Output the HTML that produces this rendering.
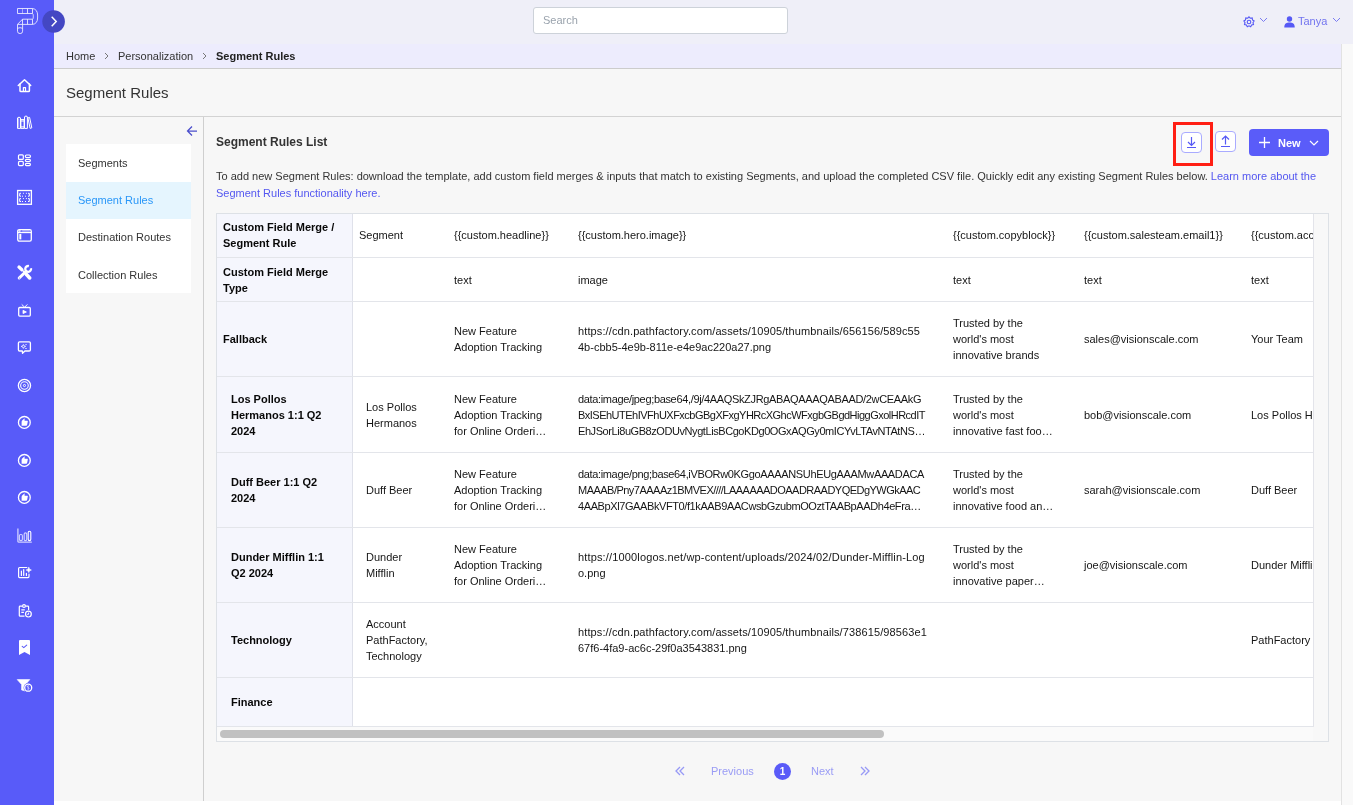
<!DOCTYPE html>
<html><head><meta charset="utf-8">
<style>
*{box-sizing:border-box;margin:0;padding:0}
html{will-change:transform}
html,body{width:1353px;height:805px;overflow:hidden;background:#fff;font-family:"Liberation Sans",sans-serif;font-size:11px;color:#333}
.a{position:absolute}
#side{left:0;top:0;width:54px;height:805px;background:#585bf9}
#hdr{left:54px;top:0;width:1299px;height:44px;background:#efeff8}
#crumb{left:54px;top:44px;width:1287px;height:25px;background:#edecfd;border-bottom:1px solid #cccccc}
#rstrip{left:1341px;top:44px;width:12px;height:761px;background:#f9f9f9;border-left:1px solid #e2e2e2}
#main{left:54px;top:69px;width:1287px;height:732px;background:#f7f7f7}
#titlebar{left:54px;top:69px;width:1287px;height:48px;border-bottom:1px solid #d3d3d3}
#vsep{left:203px;top:117px;width:1px;height:684px;background:#cfcfcf}
.nav{left:66px;width:125px;background:#fff;padding-left:12px;line-height:37px;font-size:11px;color:#333}
.icon{position:absolute}
.hl{left:217px;width:1096px;height:1px;background:#e3e5ea}
.cell{position:absolute;display:flex;align-items:center;line-height:16px;white-space:nowrap;color:#151515;font-size:11px}
.b{font-weight:bold;color:#080808}

</style></head><body>
<div id="side" class="a"></div>
<div id="hdr" class="a"></div>
<div id="crumb" class="a"></div>
<div id="rstrip" class="a"></div>
<div id="main" class="a"></div>
<div id="titlebar" class="a"></div>
<div id="vsep" class="a"></div>

<!-- search -->
<div class="a" style="left:533px;top:7px;width:255px;height:27px;background:#fff;border:1px solid #cdd2d9;border-radius:3px"></div>
<div class="a" style="left:543px;top:14px;font-size:11px;color:#9aa3ad;line-height:13px">Search</div>

<!-- breadcrumb -->
<div class="a" style="left:66px;top:49px;line-height:14px;color:#333">Home</div>
<div class="a" style="left:118px;top:49px;line-height:14px;color:#333">Personalization</div>
<div class="a" style="left:216px;top:49px;line-height:14px;color:#222;font-weight:bold">Segment Rules</div>

<!-- title -->
<div class="a" style="left:66px;top:84px;font-size:15px;line-height:18px;color:#333">Segment Rules</div>

<!-- left nav -->
<div class="a nav" style="top:144px;height:38px;line-height:38px">Segments</div>
<div class="a nav" style="top:182px;height:37px;background:#e5f5fe;color:#2a97f8">Segment Rules</div>
<div class="a nav" style="top:219px;height:37px">Destination Routes</div>
<div class="a nav" style="top:256px;height:37px;line-height:39px">Collection Rules</div>

<!-- table -->
<div class="a" style="left:216px;top:213px;width:1113px;height:529px;border:1px solid #dde1e6;background:#f8f8f8"></div>
<div class="a" style="left:217px;top:214px;width:1097px;height:513px;background:#fff;border-right:1px solid #e3e4ea"></div>
<div class="a" style="left:217px;top:214px;width:136px;height:512px;background:#f5f6fd;border-right:1px solid #dfe1ea"></div>
<div class="a hl" style="top:257px"></div>
<div class="a hl" style="top:301px"></div>
<div class="a hl" style="top:376px"></div>
<div class="a hl" style="top:452px"></div>
<div class="a hl" style="top:527px"></div>
<div class="a hl" style="top:602px"></div>
<div class="a hl" style="top:677px"></div>
<div class="a hl" style="top:726px"></div>
<div id="tclip" class="a" style="left:217px;top:214px;width:1096px;height:512px;overflow:hidden">
<div class="cell b" style="left:6px;top:0px;height:42px"><div>Custom Field Merge /<br>Segment Rule</div></div>
<div class="cell" style="left:142px;top:0px;height:42px"><div>Segment</div></div>
<div class="cell" style="left:237px;top:0px;height:42px"><div>{{custom.headline}}</div></div>
<div class="cell" style="left:361px;top:0px;height:42px"><div>{{custom.hero.image}}</div></div>
<div class="cell" style="left:736px;top:0px;height:42px"><div>{{custom.copyblock}}</div></div>
<div class="cell" style="left:867px;top:0px;height:42px"><div>{{custom.salesteam.email1}}</div></div>
<div class="cell" style="left:1034px;top:0px;height:42px"><div>{{custom.account.name}}</div></div>
<div class="cell b" style="left:6px;top:44px;height:43px"><div>Custom Field Merge<br>Type</div></div>
<div class="cell" style="left:237px;top:44px;height:43px"><div>text</div></div>
<div class="cell" style="left:361px;top:44px;height:43px"><div>image</div></div>
<div class="cell" style="left:736px;top:44px;height:43px"><div>text</div></div>
<div class="cell" style="left:867px;top:44px;height:43px"><div>text</div></div>
<div class="cell" style="left:1034px;top:44px;height:43px"><div>text</div></div>
<div class="cell b" style="left:6px;top:88px;height:74px"><div>Fallback</div></div>
<div class="cell" style="left:237px;top:88px;height:74px"><div>New Feature<br>Adoption Tracking</div></div>
<div class="cell" style="left:361px;top:88px;height:74px"><div><span style="letter-spacing:0.11px">https://cdn.pathfactory.com/assets/10905/thumbnails/656156/589c55</span><br>4b-cbb5-4e9b-811e-e4e9ac220a27.png</div></div>
<div class="cell" style="left:736px;top:88px;height:74px"><div>Trusted by the<br>world's most<br>innovative brands</div></div>
<div class="cell" style="left:867px;top:88px;height:74px"><div>sales@visionscale.com</div></div>
<div class="cell" style="left:1034px;top:88px;height:74px"><div>Your Team</div></div>
<div class="cell b" style="left:14px;top:163px;height:75px"><div>Los Pollos<br>Hermanos 1:1 Q2<br>2024</div></div>
<div class="cell" style="left:149px;top:163px;height:75px"><div>Los Pollos<br>Hermanos</div></div>
<div class="cell" style="left:237px;top:163px;height:75px"><div>New Feature<br>Adoption Tracking<br>for Online Orderi…</div></div>
<div class="cell" style="left:361px;top:163px;height:75px"><div><span style="letter-spacing:-0.34px">data:image/jpeg;base64,/9j/4AAQSkZJRgABAQAAAQABAAD/2wCEAAkG</span><br><span style="letter-spacing:-0.51px">BxISEhUTEhIVFhUXFxcbGBgXFxgYHRcXGhcWFxgbGBgdHiggGxolHRcdIT</span><br><span style="letter-spacing:-0.43px">EhJSorLi8uGB8zODUvNygtLisBCgoKDg0OGxAQGy0mICYvLTAvNTAtNS…</span></div></div>
<div class="cell" style="left:736px;top:163px;height:75px"><div>Trusted by the<br>world's most<br>innovative fast foo…</div></div>
<div class="cell" style="left:867px;top:163px;height:75px"><div>bob@visionscale.com</div></div>
<div class="cell" style="left:1034px;top:163px;height:75px"><div>Los Pollos Hermanos</div></div>
<div class="cell b" style="left:14px;top:239px;height:74px"><div>Duff Beer 1:1 Q2<br>2024</div></div>
<div class="cell" style="left:149px;top:239px;height:74px"><div>Duff Beer</div></div>
<div class="cell" style="left:237px;top:239px;height:74px"><div>New Feature<br>Adoption Tracking<br>for Online Orderi…</div></div>
<div class="cell" style="left:361px;top:239px;height:74px"><div><span style="letter-spacing:-0.35px">data:image/png;base64,iVBORw0KGgoAAAANSUhEUgAAAMwAAADACA</span><br><span style="letter-spacing:-0.52px">MAAAB/Pny7AAAAz1BMVEX////LAAAAAADOAADRAADYQEDgYWGkAAC</span><br><span style="letter-spacing:-0.4px">4AABpXl7GAABkVFT0/f1kAAB9AACwsbGzubmOOztTAABpAADh4eFra…</span></div></div>
<div class="cell" style="left:736px;top:239px;height:74px"><div>Trusted by the<br>world's most<br>innovative food an…</div></div>
<div class="cell" style="left:867px;top:239px;height:74px"><div>sarah@visionscale.com</div></div>
<div class="cell" style="left:1034px;top:239px;height:74px"><div>Duff Beer</div></div>
<div class="cell b" style="left:14px;top:314px;height:74px"><div>Dunder Mifflin 1:1<br>Q2 2024</div></div>
<div class="cell" style="left:149px;top:314px;height:74px"><div>Dunder<br>Mifflin</div></div>
<div class="cell" style="left:237px;top:314px;height:74px"><div>New Feature<br>Adoption Tracking<br>for Online Orderi…</div></div>
<div class="cell" style="left:361px;top:314px;height:74px"><div><span style="letter-spacing:0.15px">https://1000logos.net/wp-content/uploads/2024/02/Dunder-Mifflin-Log</span><br>o.png</div></div>
<div class="cell" style="left:736px;top:314px;height:74px"><div>Trusted by the<br>world's most<br>innovative paper…</div></div>
<div class="cell" style="left:867px;top:314px;height:74px"><div>joe@visionscale.com</div></div>
<div class="cell" style="left:1034px;top:314px;height:74px"><div>Dunder Mifflin</div></div>
<div class="cell b" style="left:14px;top:389px;height:74px"><div>Technology</div></div>
<div class="cell" style="left:149px;top:389px;height:74px"><div>Account<br>PathFactory,<br>Technology</div></div>
<div class="cell" style="left:361px;top:389px;height:74px"><div><span style="letter-spacing:0.11px">https://cdn.pathfactory.com/assets/10905/thumbnails/738615/98563e1</span><br>67f6-4fa9-ac6c-29f0a3543831.png</div></div>
<div class="cell" style="left:1034px;top:389px;height:74px"><div>PathFactory</div></div>
<div class="cell b" style="left:14px;top:464px;height:48px"><div>Finance</div></div>
</div>
<div class="a" style="left:217px;top:727px;width:1096px;height:14px;background:#fafafa"></div>
<div class="a" style="left:220px;top:730px;width:664px;height:8px;background:#c1c1c1;border-radius:4px"></div>
<!-- content header -->
<div class="a" style="left:216px;top:135px;font-size:12px;font-weight:bold;line-height:15px;color:#333">Segment Rules List</div>
<div class="a" style="left:216px;top:168px;width:1110px;line-height:17px;color:#333;white-space:nowrap">To add new Segment Rules: download the template, add custom field merges &amp; inputs that match to existing Segments, and upload the completed CSV file. Quickly edit any existing Segment Rules below. <span style="color:#5457f0">Learn more about the</span><br><span style="color:#5457f0">Segment Rules functionality here.</span></div>

<!-- collapse arrow -->
<svg class="a" style="left:186px;top:125px" width="12" height="12" viewBox="0 0 12 12"><path d="M6 1.5 L1.5 6 L6 10.5 M1.5 6 H11" fill="none" stroke="#4b4fcc" stroke-width="1.25"/></svg>

<!-- buttons -->
<div class="a" style="left:1181px;top:132px;width:21px;height:21px;background:#fff;border:1px solid #a9abff;border-radius:4px"></div>
<svg class="a" style="left:1181px;top:132px" width="21" height="21" viewBox="0 0 21 21"><path d="M10.5 5 V13.5 M7 10 L10.5 13.5 L14 10 M6 15.5 H15" fill="none" stroke="#5659f5" stroke-width="1.2"/></svg>
<div class="a" style="left:1215px;top:131px;width:21px;height:21px;background:#fff;border:1px solid #a9abff;border-radius:4px"></div>
<svg class="a" style="left:1215px;top:131px" width="21" height="21" viewBox="0 0 21 21"><path d="M10.5 13.5 V5 M7 8.5 L10.5 5 L14 8.5 M6 15.5 H15" fill="none" stroke="#5659f5" stroke-width="1.2"/></svg>
<div class="a" style="left:1173px;top:122px;width:40px;height:44px;border:3px solid #ff1f14"></div>
<div class="a" style="left:1249px;top:129px;width:80px;height:27px;background:#5a5cf9;border-radius:4px"></div>
<svg class="a" style="left:1259px;top:137px" width="11" height="11" viewBox="0 0 11 11"><path d="M5.5 0 V11 M0 5.5 H11" stroke="#fff" stroke-width="1.3"/></svg>
<div class="a" style="left:1278px;top:137px;font-size:11px;font-weight:bold;color:#fff;line-height:13px">New</div>
<svg class="a" style="left:1309px;top:140px" width="10" height="7" viewBox="0 0 10 7"><path d="M1 1 L5 5 L9 1" fill="none" stroke="#fff" stroke-width="1.2"/></svg>

<!-- pagination -->
<svg class="a" style="left:675px;top:766px" width="10" height="10" viewBox="0 0 10 10"><path d="M5 1 L1 5 L5 9 M9 1 L5 5 L9 9" fill="none" stroke="#9799f6" stroke-width="1.3"/></svg>
<div class="a" style="left:711px;top:764px;line-height:14px;color:#9a9cf5">Previous</div>
<div class="a" style="left:774px;top:763px;width:17px;height:17px;border-radius:50%;background:#5a5bf8;color:#fff;font-weight:bold;font-size:10px;line-height:17px;text-align:center">1</div>
<div class="a" style="left:811px;top:764px;line-height:14px;color:#9a9cf5">Next</div>
<svg class="a" style="left:860px;top:766px" width="10" height="10" viewBox="0 0 10 10"><path d="M1 1 L5 5 L1 9 M5 1 L9 5 L5 9" fill="none" stroke="#9799f6" stroke-width="1.3"/></svg>

<!-- breadcrumb chevrons -->
<svg class="a" style="left:104px;top:52px" width="5" height="8" viewBox="0 0 5 8"><path d="M1 1 L4 4 L1 7" fill="none" stroke="#777" stroke-width="1"/></svg>
<svg class="a" style="left:202px;top:52px" width="5" height="8" viewBox="0 0 5 8"><path d="M1 1 L4 4 L1 7" fill="none" stroke="#777" stroke-width="1"/></svg>

<!-- top right -->
<svg class="a" style="left:1243px;top:15.5px" width="12" height="12" viewBox="0 0 12 12"><g fill="none" stroke="#5659f5" stroke-width="1.1"><circle cx="6" cy="6" r="1.8"/><path d="M6 .8 L7.3 2.2 L9.2 1.9 L9.5 3.9 L11.1 5 L10 6.6 L10.5 8.5 L8.6 8.9 L7.7 10.7 L6 9.8 L4.3 10.7 L3.4 8.9 L1.5 8.5 L2 6.6 L.9 5 L2.5 3.9 L2.8 1.9 L4.7 2.2 Z"/></g></svg>
<svg class="a" style="left:1259px;top:17px" width="9" height="6" viewBox="0 0 9 6"><path d="M1 1 L4.5 4.5 L8 1" fill="none" stroke="#7a7cf2" stroke-width="1"/></svg>
<svg class="a" style="left:1284px;top:15.5px" width="11" height="12" viewBox="0 0 11 12"><circle cx="5.5" cy="3" r="2.7" fill="#5659f5"/><path d="M0.3 11.5 C0.3 7.5 2.5 6.6 5.5 6.6 C8.5 6.6 10.7 7.5 10.7 11.5 Z" fill="#5659f5"/></svg>
<div class="a" style="left:1298px;top:14px;line-height:14px;color:#7274ef;font-size:11px">Tanya</div>
<svg class="a" style="left:1332px;top:17px" width="9" height="6" viewBox="0 0 9 6"><path d="M1 1 L4.5 4.5 L8 1" fill="none" stroke="#7a7cf2" stroke-width="1"/></svg>

<!-- sidebar icons -->
<svg class="a" style="left:0;top:0" width="70" height="805" viewBox="0 0 70 805">
<g fill="none" stroke="#fff" stroke-width="0.85" stroke-linejoin="round" opacity="0.92">
 <path d="M17.5 8.5 H32.5 V13.5 H17.5 Z M27.5 8.5 V13.5"/><path d="M22.5 8.5 V13.5" opacity="0.6"/>
 <path d="M32.5 8.5 C36 8.8 37.6 11.8 37.6 15 V18 C37.6 21.5 35.8 24.2 32.5 24.4"/>
 <path d="M32.5 13.5 C33.2 13.9 33.3 15 33.3 16.3 C33.3 17.7 33.2 18.8 32.5 19.2"/>
 <path d="M22.5 19.2 H32.5 V24.4 H17.5 L22.5 19.2 V24.4 M27.5 19.2 V24.4"/>
 <path d="M17.5 24.4 V31.2 Q17.5 33.6 20.1 33.6 Q22.6 33.6 22.6 31.2 V24.4 M17.5 28.3 Q20 27 22.6 28.3"/>
</g>
<g transform="translate(10,72)" fill="none" stroke="#fff" stroke-width="1.5" stroke-linejoin="round" stroke-linecap="round">
 <path d="M8.3 13.5 L14.5 7.8 L20.7 13.5"/>
 <path d="M10 12 V18.7 Q10 19.5 11 19.5 H18.4 Q19.4 19.5 19.4 18.7 V12"/>
 <path d="M13.4 19.5 V15.6 H15.5 V19.5" stroke-width="1.2"/>
</g>
<g transform="translate(10,108)" fill="none" stroke="#fff" stroke-width="1" stroke-linejoin="round">
 <path d="M7.5 10 Q7.5 9.3 9 9.3 Q10.5 9.3 10.5 10 V20.4 H7.5 Z"/>
 <path d="M8.7 10.3 V19.6" opacity="0.6"/>
 <path d="M10.9 11.6 H14.1 V20.4 H10.9 Z M10.9 13 H14.1 M10.9 18.9 H14.1"/>
 <path d="M14.5 9 Q14.5 8.1 16 8.1 Q17.4 8.1 17.4 9 V20.4 H14.5 Z"/>
 <path d="M17.9 9.9 L19.6 9.4 L21.8 19.8 L20.1 20.4 Z"/>
</g>
<g transform="translate(14,150)" fill="none" stroke="#fff" stroke-width="1.2">
 <rect x="4.5" y="4.8" width="4.8" height="4.6" rx="1"/>
 <rect x="4.5" y="11.4" width="4.8" height="4.2" rx="1"/>
 <rect x="11.4" y="5" width="5" height="2.5" rx="1"/>
 <rect x="11.4" y="9.4" width="5" height="2.1" rx="1"/>
 <rect x="11.4" y="13.4" width="5" height="2.2" rx="1"/>
</g>
<g transform="translate(14,187)" fill="none" stroke="#fff">
 <rect x="3.6" y="3.5" width="13.8" height="13.8" stroke-width="1.3"/>
 <path d="M7 6.3 H5.7 V9.2 H7 M14 6.3 H15.3 V9.2 H14 M7 11.6 H5.7 V14.5 H7 M14 11.6 H15.3 V14.5 H14" stroke-width="1"/>
 <path d="M8.9 6.3 H9.9 M11.9 6.3 H12.9 M8 9.2 H9 M11 9.2 H12 M8.9 11.6 H9.9 M11.9 11.6 H12.9 M8 14.5 H9 M11 14.5 H12" stroke-width="1"/>
</g>
<g transform="translate(14,225)" fill="none" stroke="#fff" stroke-width="1.3">
 <rect x="3.7" y="4.6" width="13.6" height="11.6" rx="1.6"/>
 <path d="M3.7 7.5 H17.3"/>
 <circle cx="5.6" cy="5.9" r="0.7" stroke-width="1"/>
 <path d="M8.2 5.9 H15.8" stroke-width="1.1" opacity="0.6"/>
 <rect x="5.3" y="8.9" width="2" height="5.5" fill="#fff" stroke="none"/>
</g>
<g transform="translate(14,262)" fill="none" stroke="#fff" stroke-linecap="round">
 <path d="M5 5 L7.9 7.7" stroke-width="3.3"/>
 <path d="M7.9 7.7 L11.2 11" stroke-width="1.3"/>
 <path d="M12.3 12.3 L15.7 15.9" stroke-width="3.6"/>
 <path d="M14.9 4.1 A2.9 2.9 0 1 0 17 6.3" stroke-width="2.3" stroke-linecap="butt"/>
 <path d="M11.9 9.5 L5.2 16" stroke-width="3"/>
 <circle cx="5.3" cy="15.9" r="0.5" fill="#585bf9" stroke="none"/>
</g>
<g transform="translate(14,300)" fill="none" stroke="#fff" stroke-width="1.3" stroke-linejoin="round">
 <rect x="4.7" y="7.5" width="11.6" height="8.6" rx="1"/>
 <path d="M7.7 4.4 L10.4 7 M13.4 4.4 L10.8 7" stroke-width="1"/>
 <path d="M9 10.3 L12.4 12 L9 13.6 Z" fill="#fff" stroke-width="0.8"/>
</g>
<g transform="translate(14,337)" fill="none" stroke="#fff" stroke-width="1.3" stroke-linejoin="round">
 <path d="M5.6 4.8 H15.2 Q16.4 4.8 16.4 6 V12.8 Q16.4 14 15.2 14 H10.9 L8.5 16.3 L8.3 14 H5.6 Q4.4 14 4.4 12.8 V6 Q4.4 4.8 5.6 4.8 Z"/>
 <path d="M9.4 7.5 L10.2 9 L11.6 9.4 L10.2 9.9 L9.4 11.4 L8.6 9.9 L7.2 9.4 L8.6 9 Z" stroke-width="0.8"/>
 <path d="M11.5 7.6 H12.6 M11.4 11.5 H12.6" stroke-width="1"/>
</g>
<g transform="translate(14,375)" fill="none" stroke="#fff">
 <circle cx="10.45" cy="10.5" r="6.1" stroke-width="1.3"/>
 <circle cx="10.45" cy="10.5" r="3.8" stroke-width="1.1"/>
 <circle cx="10.45" cy="10.5" r="1.1" stroke-width="1"/>
</g>
<g transform="translate(14,411)"><circle cx="10.35" cy="11.4" r="5.9" fill="none" stroke="#fff" stroke-width="1.3"/>
 <path d="M7.6 14.8 V10.9 Q7.6 10.1 8.4 9.3 L10.6 7.3 V9.7 H13.3 Q14 9.8 13.8 10.6 L13.1 14.1 Q12.9 14.8 12.2 14.8 Z" fill="#fff"/></g>
<g transform="translate(14,449)"><circle cx="10.35" cy="11.4" r="5.9" fill="none" stroke="#fff" stroke-width="1.3"/>
 <path d="M7.6 14.8 V10.9 Q7.6 10.1 8.4 9.3 L10.6 7.3 V9.7 H13.3 Q14 9.8 13.8 10.6 L13.1 14.1 Q12.9 14.8 12.2 14.8 Z" fill="#fff"/></g>
<g transform="translate(14,486)"><circle cx="10.35" cy="11.4" r="5.9" fill="none" stroke="#fff" stroke-width="1.3"/>
 <path d="M7.6 14.8 V10.9 Q7.6 10.1 8.4 9.3 L10.6 7.3 V9.7 H13.3 Q14 9.8 13.8 10.6 L13.1 14.1 Q12.9 14.8 12.2 14.8 Z" fill="#fff"/></g>

<g transform="translate(14,525)" fill="none" stroke="#d0d1ff" stroke-width="1.1">
 <path d="M3.9 3.6 V16.6 Q3.9 17.1 4.5 17.1 H17.8" stroke-width="1.3"/>
 <rect x="5.4" y="9.5" width="3" height="6.1" rx="1.3"/>
 <rect x="10.2" y="7.9" width="2.5" height="7.7" rx="1.2"/>
 <rect x="14.2" y="6.2" width="2.6" height="9.4" rx="1.3" stroke="#fff"/>
</g>
<g transform="translate(14,562)" fill="none" stroke="#fff" stroke-width="1.2" stroke-linecap="round">
 <path d="M12.8 5.5 H5.6 Q4.6 5.5 4.6 6.5 V14.6 Q4.6 15.6 5.6 15.6 H14 Q15 15.6 15 14.6 V12.2"/>
 <path d="M7.4 9 V13.4 M9.7 7.6 V13.4 M12.4 11.3 V13.4"/>
 <path d="M14.75 5.5 Q15 7.8 17.4 8.06 Q15 8.3 14.75 10.6 Q14.5 8.3 12.1 8.06 Q14.5 7.8 14.75 5.5 Z" fill="#fff" stroke-width="0.6"/>
</g>
<g transform="translate(14,600)" fill="none" stroke="#fff" stroke-width="1.2" stroke-linejoin="round">
 <path d="M10.5 16.2 H6.1 Q5.3 16.2 5.3 15.4 V7 Q5.3 6.2 6.1 6.2 H8.4 M11.7 6.2 H13.9 Q14.6 6.2 14.6 7 V10"/>
 <circle cx="10" cy="6.1" r="1.4"/>
 <path d="M7.3 9.9 H10.8 M7.3 12.4 H9.9"/>
 <circle cx="14.4" cy="14.1" r="2.9"/>
 <path d="M14.6 12.6 V14.3 H13.2" stroke-width="1"/>
</g>
<g transform="translate(14,637)">
 <path d="M5 4 Q5 3 6 3 H15 Q16 3 16 4 V17.9 L10.5 15 L5 17.9 Z" fill="#fff"/>
 <path d="M8.2 9.4 L9.8 10.6 L12.7 8.2" fill="none" stroke="#5a5bf8" stroke-width="1.1" stroke-linecap="round"/>
</g>
<g transform="translate(14,675)">
 <path d="M3.2 4.6 H15.8 L11.2 10 V16 L7.6 15 V9.6 Z" fill="#fff" stroke="#fff" stroke-width="0.6" stroke-linejoin="round"/>
 <circle cx="14.2" cy="12.7" r="4.6" fill="#5a5bf8"/>
 <circle cx="14.2" cy="12.7" r="3.5" fill="none" stroke="#fff" stroke-width="1.3"/>
 <path d="M15.1 11.3 Q14.6 10.8 13.9 10.9 Q13 11.1 13.3 11.9 Q13.6 12.5 14.5 12.7 Q15.3 13 15 13.7 Q14.6 14.4 13.4 14" fill="none" stroke="#fff" stroke-width="0.8"/>
</g>
<circle cx="53.6" cy="21.5" r="11.3" fill="#4447c3"/>
<path d="M51.7 16.8 L56.2 21.5 L51.7 26.2" fill="none" stroke="#fff" stroke-width="1.5"/>
</svg>

</body></html>
